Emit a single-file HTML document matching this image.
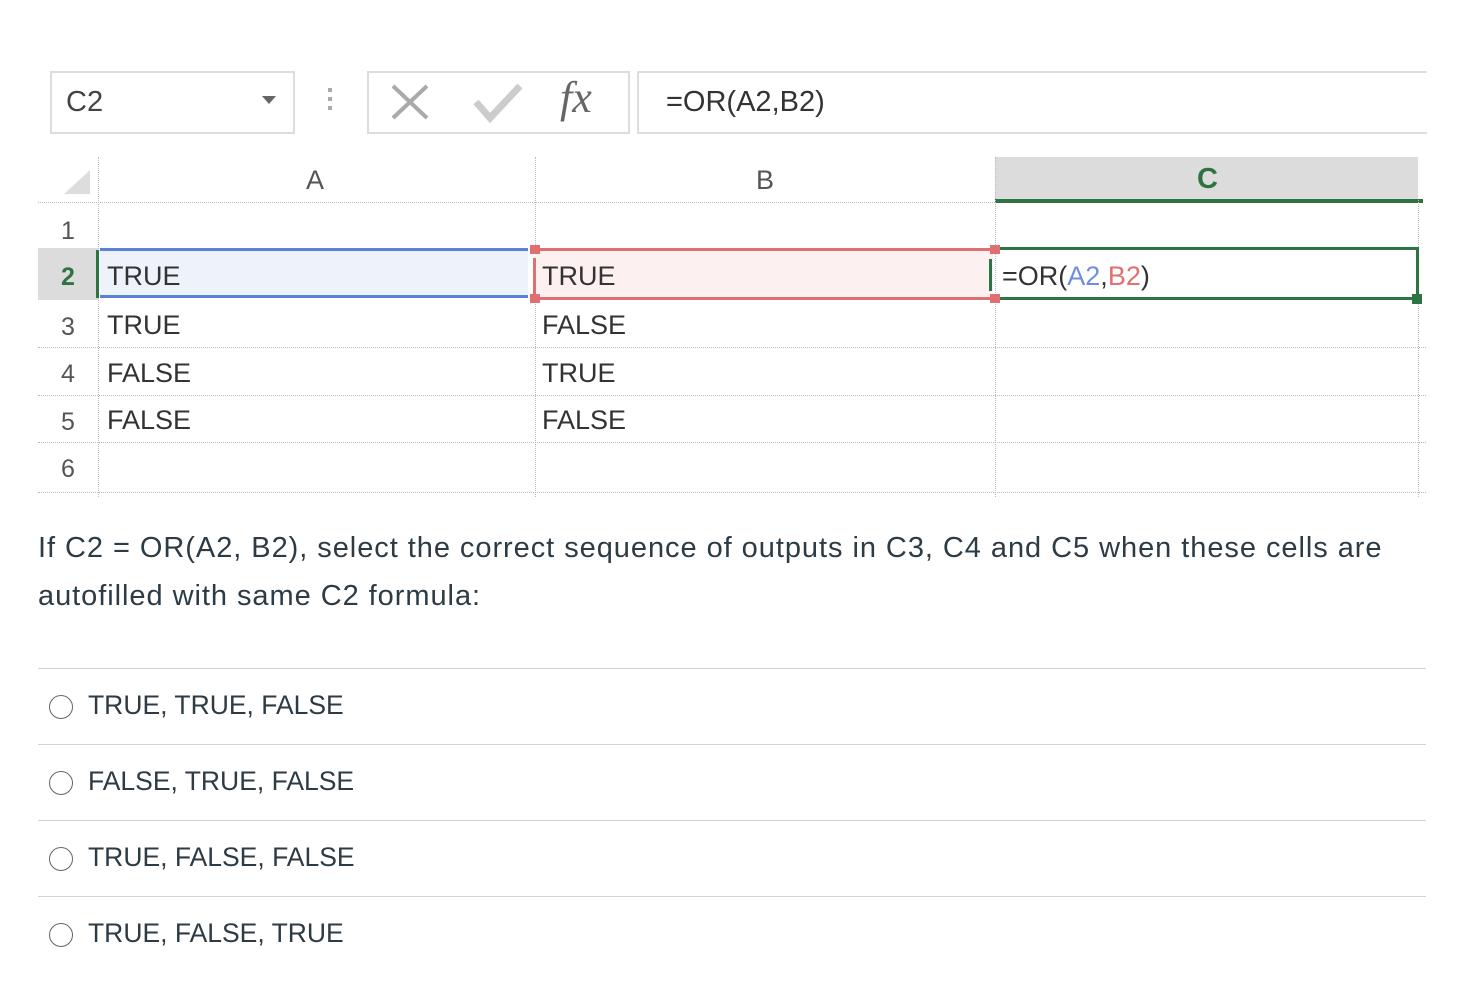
<!DOCTYPE html>
<html><head><style>
body{margin:0;width:1460px;height:996px;background:#fff;position:relative;overflow:hidden;font-family:"Liberation Sans",sans-serif}
.a{position:absolute}
.cell{position:absolute;font-size:27px;color:#333;line-height:1}
.rn{position:absolute;left:38px;width:60px;text-align:center;font-size:25px;color:#555}
.hl{position:absolute;height:0;border-top:1px dotted #bbb}
.vl{position:absolute;width:0;border-left:1px dotted #bbb}
.q{position:absolute;left:38px;font-size:29px;color:#2d3b45;letter-spacing:0.95px;white-space:nowrap}
.sep{position:absolute;left:38px;width:1388px;height:1px;background:#d5d5d5}
.opt{position:absolute;left:88px;font-size:26.5px;color:#2d3b45}
.rad{position:absolute;left:49px;width:22px;height:22px;border:1.5px solid #666;border-radius:50%}
</style></head><body>
<div class="a" style="left:50px;top:71px;width:241px;height:59px;border:2px solid #ddd"></div>
<div class="a" style="left:66px;top:86px;font-size:29px;color:#444">C2</div>
<div class="a" style="left:262px;top:96px;width:0;height:0;border-left:7px solid transparent;border-right:7px solid transparent;border-top:8px solid #666"></div>
<div class="a" style="left:328px;top:88px;width:4px;height:4px;background:#aaa;box-shadow:0 9px 0 #aaa,0 18px 0 #aaa"></div>
<div class="a" style="left:367px;top:71px;width:259px;height:59px;border:2px solid #ddd"></div>
<svg class="a" style="left:385px;top:80px" width="60" height="45"><path d="M8 6 L42 38 M42 6 L8 38" stroke="#aaa" stroke-width="4"/></svg>
<svg class="a" style="left:470px;top:80px" width="60" height="45"><path d="M6 22 L20 38 L50 6" stroke="#ccc" stroke-width="7" fill="none"/></svg>
<div class="a" style="left:560px;top:72px;font-family:'Liberation Serif',serif;font-style:italic;font-size:44px;color:#666">fx</div>
<div class="a" style="left:637px;top:71px;width:788px;height:59px;border:2px solid #ddd;border-right:none"></div>
<div class="a" style="left:666px;top:86px;font-size:29px;color:#333">=OR(A2,B2)</div>
<svg class="a" style="left:62px;top:168px" width="30" height="28"><path d="M28 2 L28 26 L2 26 Z" fill="#ddd"/></svg>
<div class="a" style="left:995px;top:157px;width:423px;height:44px;background:#dcdcdc"></div>
<div class="a" style="left:995px;top:199px;width:428px;height:4px;background:#2e7442"></div>
<div class="a" style="left:38px;top:248px;width:60px;height:52px;background:#dcdcdc"></div>
<div class="a" style="left:306px;top:165px;font-size:27px;color:#555">A</div>
<div class="a" style="left:756px;top:165px;font-size:27px;color:#555">B</div>
<div class="a" style="left:1197px;top:163px;font-size:29px;color:#2e7442;font-weight:bold">C</div>
<div class="hl" style="left:38px;top:202px;width:957px"></div>
<div class="hl" style="left:38px;top:347px;width:1388px"></div>
<div class="hl" style="left:38px;top:395px;width:1388px"></div>
<div class="hl" style="left:38px;top:442px;width:1388px"></div>
<div class="hl" style="left:38px;top:492px;width:1388px"></div>
<div class="vl" style="left:98px;top:157px;height:340px"></div>
<div class="vl" style="left:535px;top:157px;height:340px"></div>
<div class="vl" style="left:995px;top:157px;height:340px"></div>
<div class="vl" style="left:1418px;top:200px;height:297px"></div>
<div class="rn" style="top:217px">1</div>
<div class="rn" style="top:263px;color:#2e7442;font-weight:bold">2</div>
<div class="rn" style="top:313px">3</div>
<div class="rn" style="top:360px">4</div>
<div class="rn" style="top:408px">5</div>
<div class="rn" style="top:455px">6</div>
<div class="a" style="left:100px;top:248px;width:428px;height:50px;background:#eef2fb;border-top:3px solid #5b80d8;border-bottom:3px solid #5b80d8;box-sizing:border-box"></div>
<div class="a" style="left:96px;top:250px;width:3px;height:48px;background:#2e7442"></div>
<div class="a" style="left:535px;top:248px;width:458px;height:52px;background:#fcf0f0;border-top:3px solid #e07070;border-bottom:3px solid #e07070;box-sizing:border-box"></div>
<div class="a" style="left:533px;top:258px;width:3px;height:36px;background:#e07070"></div>
<div class="a" style="left:530px;top:245px;width:10px;height:9px;background:#e07070"></div>
<div class="a" style="left:530px;top:294px;width:10px;height:9px;background:#e07070"></div>
<div class="a" style="left:990px;top:245px;width:10px;height:9px;background:#e07070"></div>
<div class="a" style="left:990px;top:294px;width:10px;height:9px;background:#e07070"></div>
<div class="a" style="left:1000px;top:247px;width:419px;height:53px;border:3px solid #2e7442;border-left:none;box-sizing:border-box"></div>
<div class="a" style="left:989px;top:259px;width:3px;height:32px;background:#2e7442"></div>
<div class="a" style="left:1412px;top:294px;width:10px;height:10px;background:#2e7442"></div>
<div class="cell" style="left:107px;top:263px">TRUE</div>
<div class="cell" style="left:542px;top:263px">TRUE</div>
<div class="cell" style="left:1002px;top:263px">=OR(<span style="color:#6f8ee0">A2</span>,<span style="color:#e07070">B2</span>)</div>
<div class="cell" style="left:107px;top:312px">TRUE</div>
<div class="cell" style="left:542px;top:312px">FALSE</div>
<div class="cell" style="left:107px;top:360px">FALSE</div>
<div class="cell" style="left:542px;top:360px">TRUE</div>
<div class="cell" style="left:107px;top:407px">FALSE</div>
<div class="cell" style="left:542px;top:407px">FALSE</div>
<div class="q" style="top:532px">If C2 = OR(A2, B2), select the correct sequence of outputs in C3, C4 and C5 when these cells are</div>
<div class="q" style="top:580px">autofilled with same C2 formula:</div>
<div class="sep" style="top:668px"></div>
<div class="rad" style="top:695px"></div><div class="opt" style="top:690px">TRUE, TRUE, FALSE</div>
<div class="sep" style="top:744px"></div>
<div class="rad" style="top:771px"></div><div class="opt" style="top:766px">FALSE, TRUE, FALSE</div>
<div class="sep" style="top:820px"></div>
<div class="rad" style="top:847px"></div><div class="opt" style="top:842px">TRUE, FALSE, FALSE</div>
<div class="sep" style="top:896px"></div>
<div class="rad" style="top:923px"></div><div class="opt" style="top:918px">TRUE, FALSE, TRUE</div>
</body></html>
